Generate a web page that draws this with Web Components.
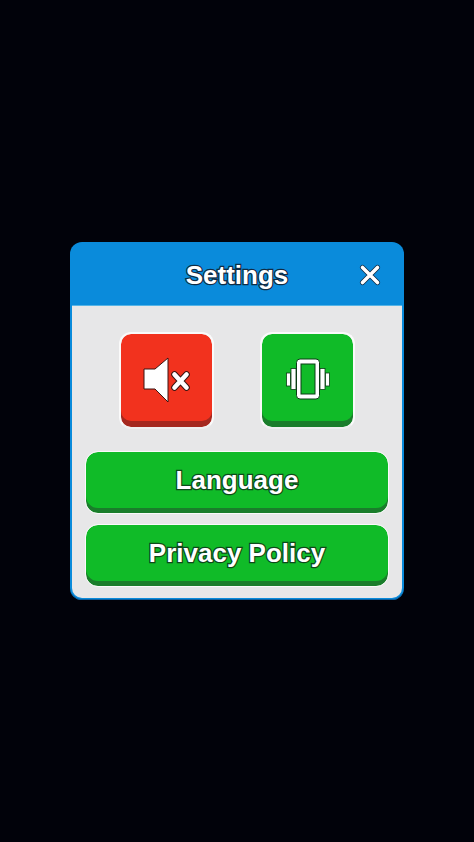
<!DOCTYPE html>
<html>
<head>
<meta charset="utf-8">
<title>Settings</title>
<style>
html, body { margin: 0; height: 100%; background: #01020a; }
body { display: flex; align-items: center; justify-content: center; font-family: "Liberation Sans", Arial, sans-serif; }
</style>
</head>
<body>
<settings-panel title-text="Settings">
  <game-icon-button slot="icons" color="red">
    <svg viewBox="0 0 60 60" width="60" height="60">
      <path d="M7 18H18L31 7V51L18 38H7Z" fill="#fff" stroke="#3a1512" stroke-width="1" stroke-linejoin="round"/>
      <path d="M37.500 23.500L49.500 36.500M49.500 23.500L37.500 36.500" stroke="#3a1512" stroke-width="6.600" stroke-linecap="round" fill="none"/>
      <path d="M37.500 23.500L49.500 36.500M49.500 23.500L37.500 36.500" stroke="#fff" stroke-width="4.600" stroke-linecap="round" fill="none"/>
    </svg>
  </game-icon-button>
  <game-icon-button slot="icons" color="green">
    <svg viewBox="0 0 60 60" width="60" height="60">
      <g fill="#fff" stroke="#0b3d14" stroke-width=".8">
        <rect x="8.500" y="22" width="4" height="13"/>
        <rect x="13" y="17.500" width="5" height="21"/>
        <rect x="42" y="17.500" width="5" height="21"/>
        <rect x="47.500" y="22" width="4" height="13"/>
      </g>
      <rect x="18.500" y="8" width="23" height="40" rx="3.500" fill="#fff" stroke="#0b3d14" stroke-width="1"/>
      <rect x="23" y="13" width="14" height="30" fill="#10bb28" stroke="#0b3d14" stroke-width="1"/>
    </svg>
  </game-icon-button>
  <game-wide-button>Language</game-wide-button>
  <game-wide-button>Privacy Policy</game-wide-button>
</settings-panel>

<script>
class SettingsPanel extends HTMLElement {
  constructor() {
    super()
    this.shadowDOM = this.attachShadow({mode: "open"})
  }

  connectedCallback() {
    this.shadowDOM.innerHTML = `
      <style>
      :host {
        display: block;
        width: 334px;
        box-sizing: border-box;
        background: #0a8bdb;
        border-radius: 12px;
        padding: 0 2px 2px;
        box-shadow: inset 0 -1px 0 #0a5fa0;
      }
      header {
        box-sizing: border-box;
        height: 63px;
        padding-top: 4px;
        display: flex;
        align-items: center;
        justify-content: center;
        position: relative;
        color: #fff;
      }
      h1 {
        margin: 0;
        font-size: 26px;
        font-weight: bold;
        -webkit-text-stroke: 2.500px #0f2c45;
        paint-order: stroke fill;
      }
      .close {
        position: absolute;
        right: 20px;
        top: 21px;
        width: 24px;
        height: 24px;
      }
      .body {
        background: #e7e7e8;
        border-top: 1px solid #55b4e6;
        border-radius: 0 0 10px 10px;
        padding: 26px 13px 11px;
        display: flex;
        flex-direction: column;
        gap: 10px;
      }
      .icons {
        display: flex;
        justify-content: center;
        gap: 46px;
        margin-bottom: 12px;
      }
      </style>
      <header>
        <h1>${this.getAttribute("title-text")}</h1>
        <svg class="close" viewBox="0 0 24 24">
          <path d="M4.500 4.500L19.500 19.500M19.500 4.500L4.500 19.500" stroke="#0f2c45" stroke-width="5.200" stroke-linecap="round"/>
          <path d="M4.500 4.500L19.500 19.500M19.500 4.500L4.500 19.500" stroke="#fff" stroke-width="3.600" stroke-linecap="round"/>
        </svg>
      </header>
      <div class="body">
        <div class="icons"><slot name="icons"></slot></div>
        <slot></slot>
      </div>
    `
  }
}

class GameIconButton extends HTMLElement {
  constructor() {
    super()
    this.shadowDOM = this.attachShadow({mode: "open"})
  }

  connectedCallback() {
    const red = this.getAttribute("color") === "red"
    this.shadowDOM.innerHTML = `
      <style>
      :host {
        display: flex;
        align-items: center;
        justify-content: center;
        box-sizing: border-box;
        width: 95px;
        height: 97px;
        border: 2px solid #fafafa;
        border-bottom-color: #f0f0f0;
        border-radius: 12px;
        background: ${red ? "#f2321e" : "#10bb28"};
        box-shadow: inset 0 -6px 0 ${red ? "#a5281f" : "#1a7d2b"};
        background-clip: padding-box;
      }
      </style>
      <slot></slot>
    `
  }
}

class GameWideButton extends HTMLElement {
  constructor() {
    super()
    this.shadowDOM = this.attachShadow({mode: "open"})
  }

  connectedCallback() {
    this.shadowDOM.innerHTML = `
      <style>
      :host {
        display: flex;
        align-items: center;
        justify-content: center;
        box-sizing: border-box;
        height: 63px;
        padding-bottom: 5px;
        border: 1px solid #fafafa;
        border-radius: 13px;
        background: #10bb28;
        background-clip: padding-box;
        box-shadow: inset 0 -5px 0 #1a7d2b;
        color: #fff;
        font-size: 26px;
        font-weight: bold;
        -webkit-text-stroke: 2.500px #0d4a1a;
        paint-order: stroke fill;
      }
      </style>
      <slot></slot>
    `
  }
}

customElements.define("settings-panel", SettingsPanel)
customElements.define("game-icon-button", GameIconButton)
customElements.define("game-wide-button", GameWideButton)
</script>
</body>
</html>
